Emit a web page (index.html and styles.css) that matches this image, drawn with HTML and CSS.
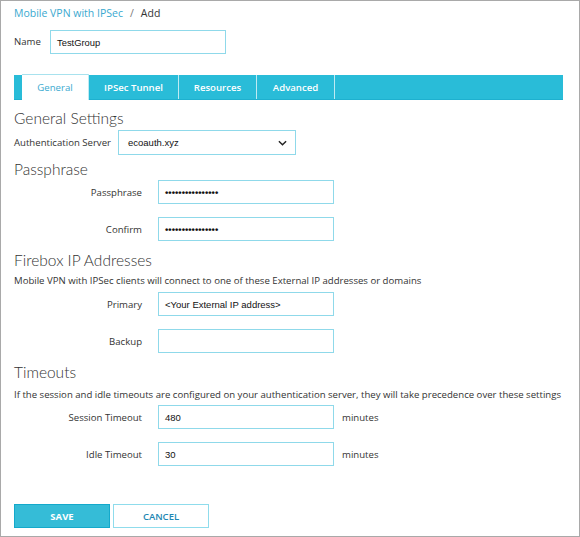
FILE: index.html
```html
<!DOCTYPE html>
<html>
<head>
<meta charset="utf-8">
<link rel="stylesheet" href="styles.css">
</head>
<body>
<div class="frame">
  <div class="crumbs"><span class="crumb-link">Mobile VPN with IPSec</span><span class="crumb-sep">/</span><span class="crumb-cur">Add</span></div>
  <div class="name-row">
    <span class="lbl">Name</span>
    <div class="input name-input">TestGroup</div>
  </div>
  <div class="tabs">
    <div class="tab active">General</div>
    <div class="tab t2">IPSec Tunnel</div>
    <div class="tab t3">Resources</div>
    <div class="tab t4">Advanced</div>
  </div>

  <h2 class="h h-first">General Settings</h2>
  <div class="auth-row">
    <span class="lbl">Authentication Server</span>
    <div class="input select">ecoauth.xyz<svg class="chev" viewBox="0 0 10 6" width="9" height="6"><path d="M1 1l4 4 4-4" fill="none" stroke="#222" stroke-width="1.6"/></svg></div>
  </div>

  <h2 class="h h-pass">Passphrase</h2>
  <div class="row first"><span class="rl">Passphrase</span><div class="input field dots">••••••••••••••••</div></div>
  <div class="row"><span class="rl">Confirm</span><div class="input field dots">••••••••••••••••</div></div>

  <h2 class="h h-sec">Firebox IP Addresses</h2>
  <p class="desc">Mobile VPN with IPSec clients will connect to one of these External IP addresses or domains</p>
  <div class="row after-desc1"><span class="rl">Primary</span><div class="input field">&lt;Your External IP address&gt;</div></div>
  <div class="row"><span class="rl">Backup</span><div class="input field"></div></div>

  <h2 class="h h-sec2">Timeouts</h2>
  <p class="desc desc2">If the session and idle timeouts are configured on your authentication server, they will take precedence over these settings</p>
  <div class="row after-desc"><span class="rl">Session Timeout</span><div class="input field">480</div><span class="unit">minutes</span></div>
  <div class="row"><span class="rl">Idle Timeout</span><div class="input field">30</div><span class="unit">minutes</span></div>

  <div class="buttons">
    <div class="btn save">SAVE</div>
    <div class="btn cancel">CANCEL</div>
  </div>
</div>
</body>
</html>
```
FILE: styles.css
```css
* { box-sizing: border-box; }
html, body { margin: 0; padding: 0; background: #fff; }
body { font-family: "Open Sans", "Noto Sans", sans-serif; color: #333; }
.frame {
  width: 580px; height: 537px;
  border: 1px solid #a9a9a9;
  padding: 0 0 0 13px;
  position: relative;
}
.crumbs { font-size: 10.5px; padding-top: 5px; height: 24px; line-height: 14px; }
.crumb-link { color: #3aa9cf; }
.crumb-sep { color: #777; margin: 0 7px; }
.crumb-cur { color: #333; }
.name-row { display: flex; align-items: center; height: 24px; margin-top: 5px; }
.name-row .lbl { width: 36px; margin-top: -2px; }
.lbl { font-size: 9.6px; color: #333; }
.input {
  border: 1px solid #8fd9ea;
  height: 24px;
  font-family: "Liberation Sans", Arial, sans-serif;
  font-size: 9.5px;
  color: #111;
  display: flex; align-items: center;
  padding-left: 9px;
}
.name-input { width: 176px; padding-left: 6px; font-size: 9.4px; }
.tabs {
  margin-top: 21px;
  margin-right: 16px;
  height: 25px;
  background: #29bcd8;
  border-bottom: 1px solid #1eb0cf;
  display: flex;
  padding-left: 8px;
}
.tab {
  color: #fff; font-weight: 600; font-size: 9.6px;
  display: flex; align-items: center; justify-content: center;
  border-right: 1px solid #bfeaf3;
  height: 24px;
}
.tab.active {
  background: #fff; color: #3aa9cf; font-weight: 400;
  border-top: 1px solid #a8e2ee;
  margin-top: -1px; height: 26px;
  width: 67px;
}
.t2 { width: 90px; }
.t3 { width: 78px; }
.t4 { width: 78px; }
.h {
  font-family: "Lato", "Open Sans", sans-serif;
  font-weight: 300; font-size: 15.5px; color: #333;
  margin: 0; line-height: 18px;
}
.h-first { margin-top: 9px; }
.auth-row { display: flex; align-items: center; margin-top: 3px; margin-bottom: 5px; }
.auth-row .lbl { width: 104px; }
.select { width: 178px; height: 25px; justify-content: space-between; padding-right: 8px; }
.row { display: flex; align-items: center; margin-top: 13px; }
.row.first { margin-top: 2px; }
.rl { width: 131px; text-align: right; font-size: 9.6px; padding-right: 3px; }
.field { width: 176px; margin-left: 13px; height: 24px; padding-left: 6px; }
.dots { font-size: 9.5px; letter-spacing: 0; font-weight: bold; }
.unit { font-size: 9.6px; margin-left: 8px; }
.desc { font-size: 9.6px; margin: 5px 0 0; line-height: 14px; }
.desc2 { margin-top: 7px; }
.row.after-desc { margin-top: 3px; }
.row.after-desc1 { margin-top: 4px; }
.h-sec { margin-top: 10px; }
.h-sec2 { margin-top: 10px; }
.buttons { display: flex; gap: 3px; position: absolute; left: 13px; top: 503px; }
.btn {
  width: 96px; height: 24px; display: flex; align-items: center; justify-content: center;
  font-size: 9.5px; font-weight: 700;
}
.save { background: #35bcd7; border: 1px solid #14a9cb; color: #fff; }
.cancel { background: #fff; border: 1px solid #8fdcec; color: #1e87b3; font-weight: 600; }
```
